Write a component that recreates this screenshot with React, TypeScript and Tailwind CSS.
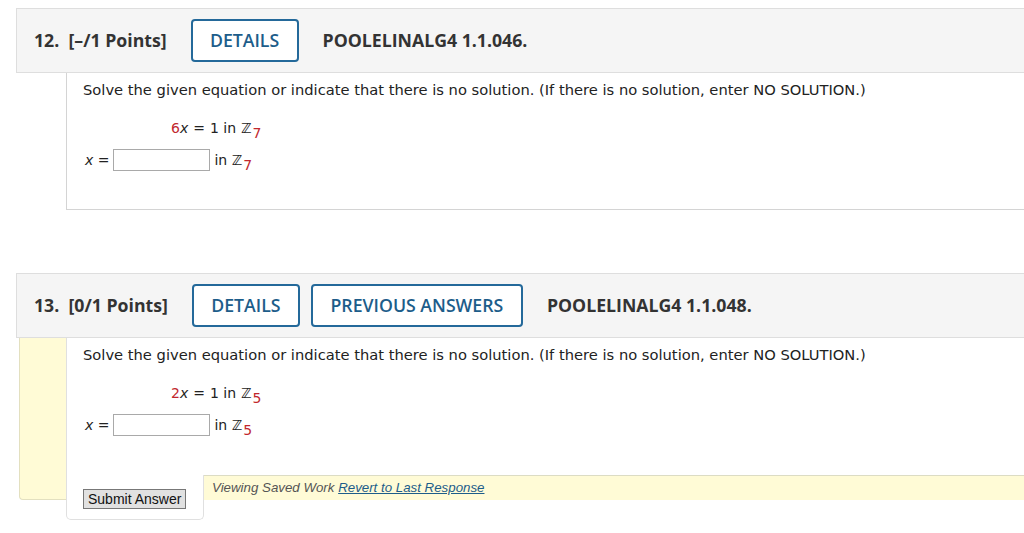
import React from "react";

const RED = "text-[#c1272d]";

// one "a x = 1 in Z_n" line
const Equation = ({ a, n }: { a: string; n: string }) => (
  <div className="ml-[88px] flex h-[18px] items-baseline text-[14px] leading-[18px] text-[#222]">
    <span className={RED}>{a}</span>
    <i>x</i>
    <span className="ml-[5px]">=</span>
    <span className="ml-[5px]">1 in</span>
    <span className="ml-[5px]">ℤ</span>
    <sub className={`${RED} bottom-[-5px] ml-[1px] text-[14px]`}>{n}</sub>
  </div>
);

const AnswerRow = ({ n }: { n: string }) => (
  <div className="flex h-[22px] items-center text-[14px] text-[#222]">
    <span className="ml-[2px]">
      <i>x</i> =
    </span>
    <input
      type="text"
      className="ml-[4px] h-[22px] w-[97px] border border-[#a9a9a9] bg-white outline-none"
    />
    <span className="ml-[4px]">in ℤ</span>
    <sub className={`${RED} bottom-[-5px] ml-[1px] text-[14px]`}>{n}</sub>
  </div>
);

const Header = ({
  num,
  points,
  code,
  previous,
}: {
  num: string;
  points: string;
  code: string;
  previous?: boolean;
}) => (
  <div className="flex h-[65px] items-center border border-r-0 border-[#dedede] bg-[#f5f5f5] pl-[17px] font-['Open_Sans',sans-serif] text-[17.7px] text-[#333]">
    <span className="font-bold">
      {num}&nbsp; [{points} Points]
    </span>
    <button className="ml-[24px] h-[43px] w-[108px] rounded-[4px] border-2 border-[#24699a] bg-white text-[17.7px] font-semibold text-[#1d5d8a]">
      DETAILS
    </button>
    {previous && (
      <button className="ml-[11px] h-[43px] w-[212px] rounded-[4px] border-2 border-[#24699a] bg-white text-[17.7px] font-semibold text-[#1d5d8a]">
        PREVIOUS ANSWERS
      </button>
    )}
    <span className="ml-[24px] font-bold">{code}</span>
  </div>
);

const Prompt = () => (
  <p className="text-[14.7px] leading-[18px] text-[#222]">
    Solve the given equation or indicate that there is no solution. (If there is
    no solution, enter NO SOLUTION.)
  </p>
);

export default function App() {
  return (
    <div className="h-[533px] w-[1024px] overflow-hidden bg-white font-['DejaVu_Sans',sans-serif]">
      {/* question 12 */}
      <div className="ml-4 mt-2">
        <Header num="12." points="–/1" code="POOLELINALG4 1.1.046." />
        <div className="ml-[50px] flex h-[137px] flex-col border-b border-l border-[#d4d4d4] pl-4 pt-[8px]">
          <Prompt />
          <div className="mt-[20px]">
            <Equation a="6" n="7" />
          </div>
          <div className="mt-[12px]">
            <AnswerRow n="7" />
          </div>
        </div>
      </div>

      {/* question 13 */}
      <div className="ml-4 mt-[63px]">
        <Header num="13." points="0/1" code="POOLELINALG4 1.1.048." previous />
        <div className="ml-[3px] h-[162px] rounded-bl-[4px] border border-t-0 border-r-0 border-[#e3e0c0] bg-[#fffbd6] pl-[46px]">
          <div className="flex flex-col">
            <div className="flex h-[137px] flex-col border-l border-[#e0e0e0] bg-white pl-4 pt-[8px]">
              <Prompt />
              <div className="mt-[20px]">
                <Equation a="2" n="5" />
              </div>
              <div className="mt-[12px]">
                <AnswerRow n="5" />
              </div>
            </div>
            <div className="flex">
              <div className="h-[45px] w-[138px] rounded-b-[5px] border border-t-0 border-[#e0e0e0] bg-white pl-[16px] pt-[12px]">
                <button className="h-[20px] border border-[#777] bg-[#e1e1e1] px-[4px] font-['Liberation_Sans',sans-serif] text-[14px] leading-none text-[#111]">
                  Submit Answer
                </button>
              </div>
              <div className="flex h-[25px] flex-1 items-center border-t border-[#dcdcc4] bg-[#fffbd6] pl-[8px] font-['Liberation_Sans',sans-serif] text-[13.3px] italic text-[#555]">
                Viewing Saved Work&nbsp;
                <a href="#" className="text-[#1d5d8a] underline">
                  Revert to Last Response
                </a>
              </div>
            </div>
          </div>
        </div>
      </div>
    </div>
  );
}
